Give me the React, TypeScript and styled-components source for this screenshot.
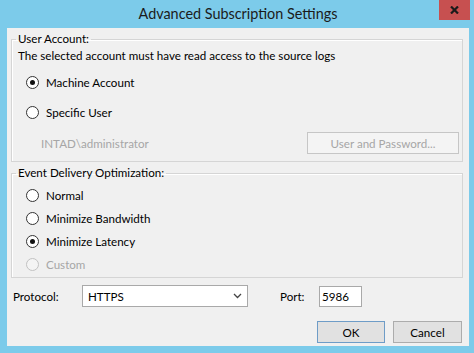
import React from "react";
import styled, { createGlobalStyle } from "styled-components";

const Global = createGlobalStyle`
  html, body { margin: 0; padding: 0; }
  body { font-family: Lato, "Noto Sans", sans-serif; font-size: 11.6px; color: #000; }
`;

const Window = styled.div`
  width: 474px;
  height: 353px;
  background: #7ccbea;
  display: flex;
  flex-direction: column;
  box-sizing: border-box;
`;

const TitleBar = styled.div`
  height: 28px;
  display: grid;
  grid-template-columns: 1fr auto 1fr;
  align-items: start;
`;

const Title = styled.div`
  grid-column: 2;
  font-size: 14.4px;
  line-height: 28px;
  color: #1b1b1b;
  padding-left: 2px;
`;

const Close = styled.div`
  grid-column: 3;
  justify-self: end;
  width: 31px;
  height: 20px;
  margin-right: 4px;
  background: #c75050;
  display: flex;
  align-items: center;
  justify-content: center;
`;

const Client = styled.div`
  flex: 1;
  margin: 0 5px 7px 7px;
  background: #f0f0f0;
  display: flex;
  flex-direction: column;
  padding: 3px 6px 0 4px;
`;

const Group = styled.fieldset`
  margin: 0;
  padding: 0;
  border: 1px solid #d5d5d5;
  box-shadow: inset 1px 1px 0 #fff;
  min-width: 0;
  display: flex;
  flex-direction: column;
`;

const Legend = styled.legend`
  padding: 0 2px;
  margin-left: 4px;
  line-height: 16px;
`;

const Text = styled.div`
  padding-left: 6px;
  line-height: 18px;
`;

const RadioRow = styled.div<{ $h: number; $mt?: number; $disabled?: boolean }>`
  height: ${(p) => p.$h}px;
  margin-top: ${(p) => p.$mt ?? 0}px;
  display: flex;
  align-items: center;
  gap: 7px;
  padding-left: 14px;
  color: ${(p) => (p.$disabled ? "#a6a6a6" : "#000")};
`;

const Circle = styled.span<{ $checked?: boolean; $disabled?: boolean }>`
  width: 11px;
  height: 11px;
  border-radius: 50%;
  border: 1px solid ${(p) => (p.$disabled ? "#c2c2c2" : "#333")};
  background: ${(p) => (p.$disabled ? "#f4f4f4" : "#fff")};
  display: flex;
  align-items: center;
  justify-content: center;
  &::after {
    content: "";
    display: ${(p) => (p.$checked ? "block" : "none")};
    width: 5px;
    height: 5px;
    border-radius: 50%;
    background: #111;
  }
`;

const Radio: React.FC<{ label: string; checked?: boolean; disabled?: boolean; h: number; mt?: number }> = ({
  label,
  checked,
  disabled,
  h,
  mt,
}) => (
  <RadioRow $h={h} $mt={mt} $disabled={disabled}>
    <Circle $checked={checked} $disabled={disabled} />
    <span>{label}</span>
  </RadioRow>
);

const CredRow = styled.div`
  margin-top: 11px;
  margin-bottom: 7px;
  height: 22px;
  display: flex;
  align-items: center;
  justify-content: space-between;
  padding: 0 3px 0 29px;
`;

const GreyText = styled.span`
  color: #a6a6a6;
`;

const Button = styled.div<{ $w: number; $disabled?: boolean; $default?: boolean }>`
  width: ${(p) => p.$w}px;
  height: 22px;
  box-sizing: border-box;
  display: flex;
  align-items: center;
  justify-content: center;
  border: 1px solid ${(p) => (p.$disabled ? "#c6c6c6" : p.$default ? "#6e9cc7" : "#acacac")};
  background: ${(p) => (p.$disabled ? "#f4f4f4" : "#e1e1e1")};
  color: ${(p) => (p.$disabled ? "#a6a6a6" : "#000")};
`;

const Spacer = styled.div<{ $h: number }>`
  height: ${(p) => p.$h}px;
  flex-shrink: 0;
`;

const FieldRow = styled.div`
  margin-top: 7px;
  height: 22px;
  display: flex;
  align-items: center;
`;

const FieldLabel = styled.span<{ $w: number }>`
  width: ${(p) => p.$w}px;
  padding-left: 2px;
  box-sizing: border-box;
`;

const Select = styled.div`
  width: 166px;
  height: 22px;
  box-sizing: border-box;
  border: 1px solid #a9a9a9;
  background: #fff;
  display: flex;
  align-items: center;
  justify-content: space-between;
  padding: 0 5px 0 5px;
  margin-right: 30px;
`;

const Input = styled.div`
  width: 43px;
  height: 21px;
  box-sizing: border-box;
  border: 1px solid #a9a9a9;
  background: #fff;
  display: flex;
  align-items: center;
  padding-left: 2px;
  font-size: 11.6px;
`;

const ButtonRow = styled.div`
  margin-top: 14px;
  display: flex;
  justify-content: flex-end;
  gap: 8px;
  padding-right: 1px;
`;

export default function App() {
  return (
    <>
      <Global />
      <Window>
        <TitleBar>
          <Title>Advanced Subscription Settings</Title>
          <Close>
            <svg width="9" height="8" viewBox="0 0 9 8">
              <path d="M1 0.5 L8 7.5 M8 0.5 L1 7.5" stroke="#1a1a1a" strokeWidth="2.2" />
            </svg>
          </Close>
        </TitleBar>
        <Client>
          <Group>
            <Legend>User Account:</Legend>
            <Text>The selected account must have read access to the source logs</Text>
            <Radio label="Machine Account" checked h={18} mt={8} />
            <Radio label="Specific User" h={18} mt={12} />
            <CredRow>
              <GreyText>INTAD\administrator</GreyText>
              <Button $w={152} $disabled>
                User and Password...
              </Button>
            </CredRow>
          </Group>
          <Spacer $h={3} />
          <Group>
            <Legend>Event Delivery Optimization:</Legend>
            <Spacer $h={3} />
            <Radio label="Normal" h={23} />
            <Radio label="Minimize Bandwidth" h={23} />
            <Radio label="Minimize Latency" checked h={23} />
            <Radio label="Custom" disabled h={23} />
            <Spacer $h={1} />
          </Group>
          <FieldRow>
            <FieldLabel $w={71}>Protocol:</FieldLabel>
            <Select>
              <span>HTTPS</span>
              <svg width="9" height="6" viewBox="0 0 9 6">
                <path d="M1 1 L4.5 4.5 L8 1" stroke="#444" strokeWidth="1.3" fill="none" />
              </svg>
            </Select>
            <FieldLabel $w={41}>Port:</FieldLabel>
            <Input>5986</Input>
          </FieldRow>
          <ButtonRow>
            <Button $w={68} $default>
              OK
            </Button>
            <Button $w={69}>Cancel</Button>
          </ButtonRow>
        </Client>
      </Window>
    </>
  );
}
